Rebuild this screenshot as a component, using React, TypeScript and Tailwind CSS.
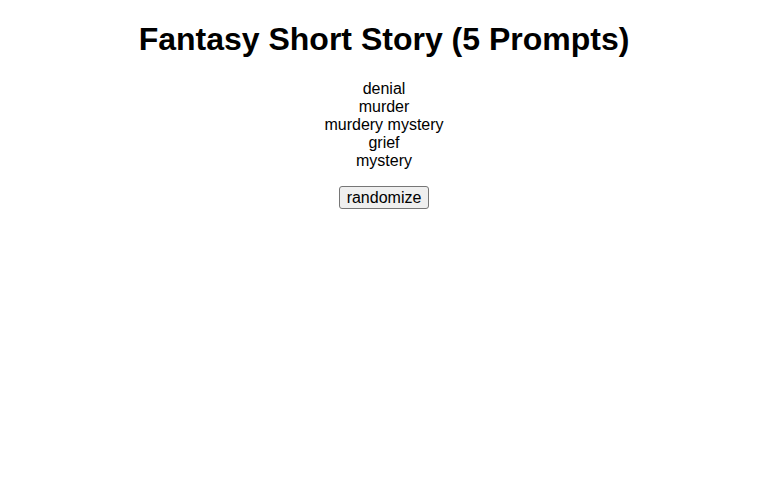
import React, { useState } from 'react';

const PROMPTS = ['denial', 'murder', 'murdery mystery', 'grief', 'mystery'];
const POOL = ['denial', 'murder', 'murdery mystery', 'grief', 'mystery', 'betrayal', 'dragons', 'a lost crown', 'revenge', 'hope'];

const App: React.FC = () => {
  const [prompts, setPrompts] = useState(PROMPTS);

  const randomize = () => {
    setPrompts(prompts.map(() => POOL[Math.floor(Math.random() * POOL.length)]));
  };

  return (
    <div className="min-h-screen bg-white text-black text-center font-['Liberation_Sans',Arial,sans-serif]">
      <h1 className="pt-[21px] mb-[22px] text-[32px] leading-[37px] font-bold">Fantasy Short Story (5 Prompts)</h1>
      <div className="text-base leading-[18px]">
        {prompts.map((p, i) => (
          <div key={i}>{p}</div>
        ))}
      </div>
      <div className="mt-[16px]">
        <button
          onClick={randomize}
          className="h-[23px] px-[7px] text-base leading-[19px] bg-[#efefef] border border-[#767676] rounded-[3px]"
        >
          randomize
        </button>
      </div>
    </div>
  );
};

export default App;
